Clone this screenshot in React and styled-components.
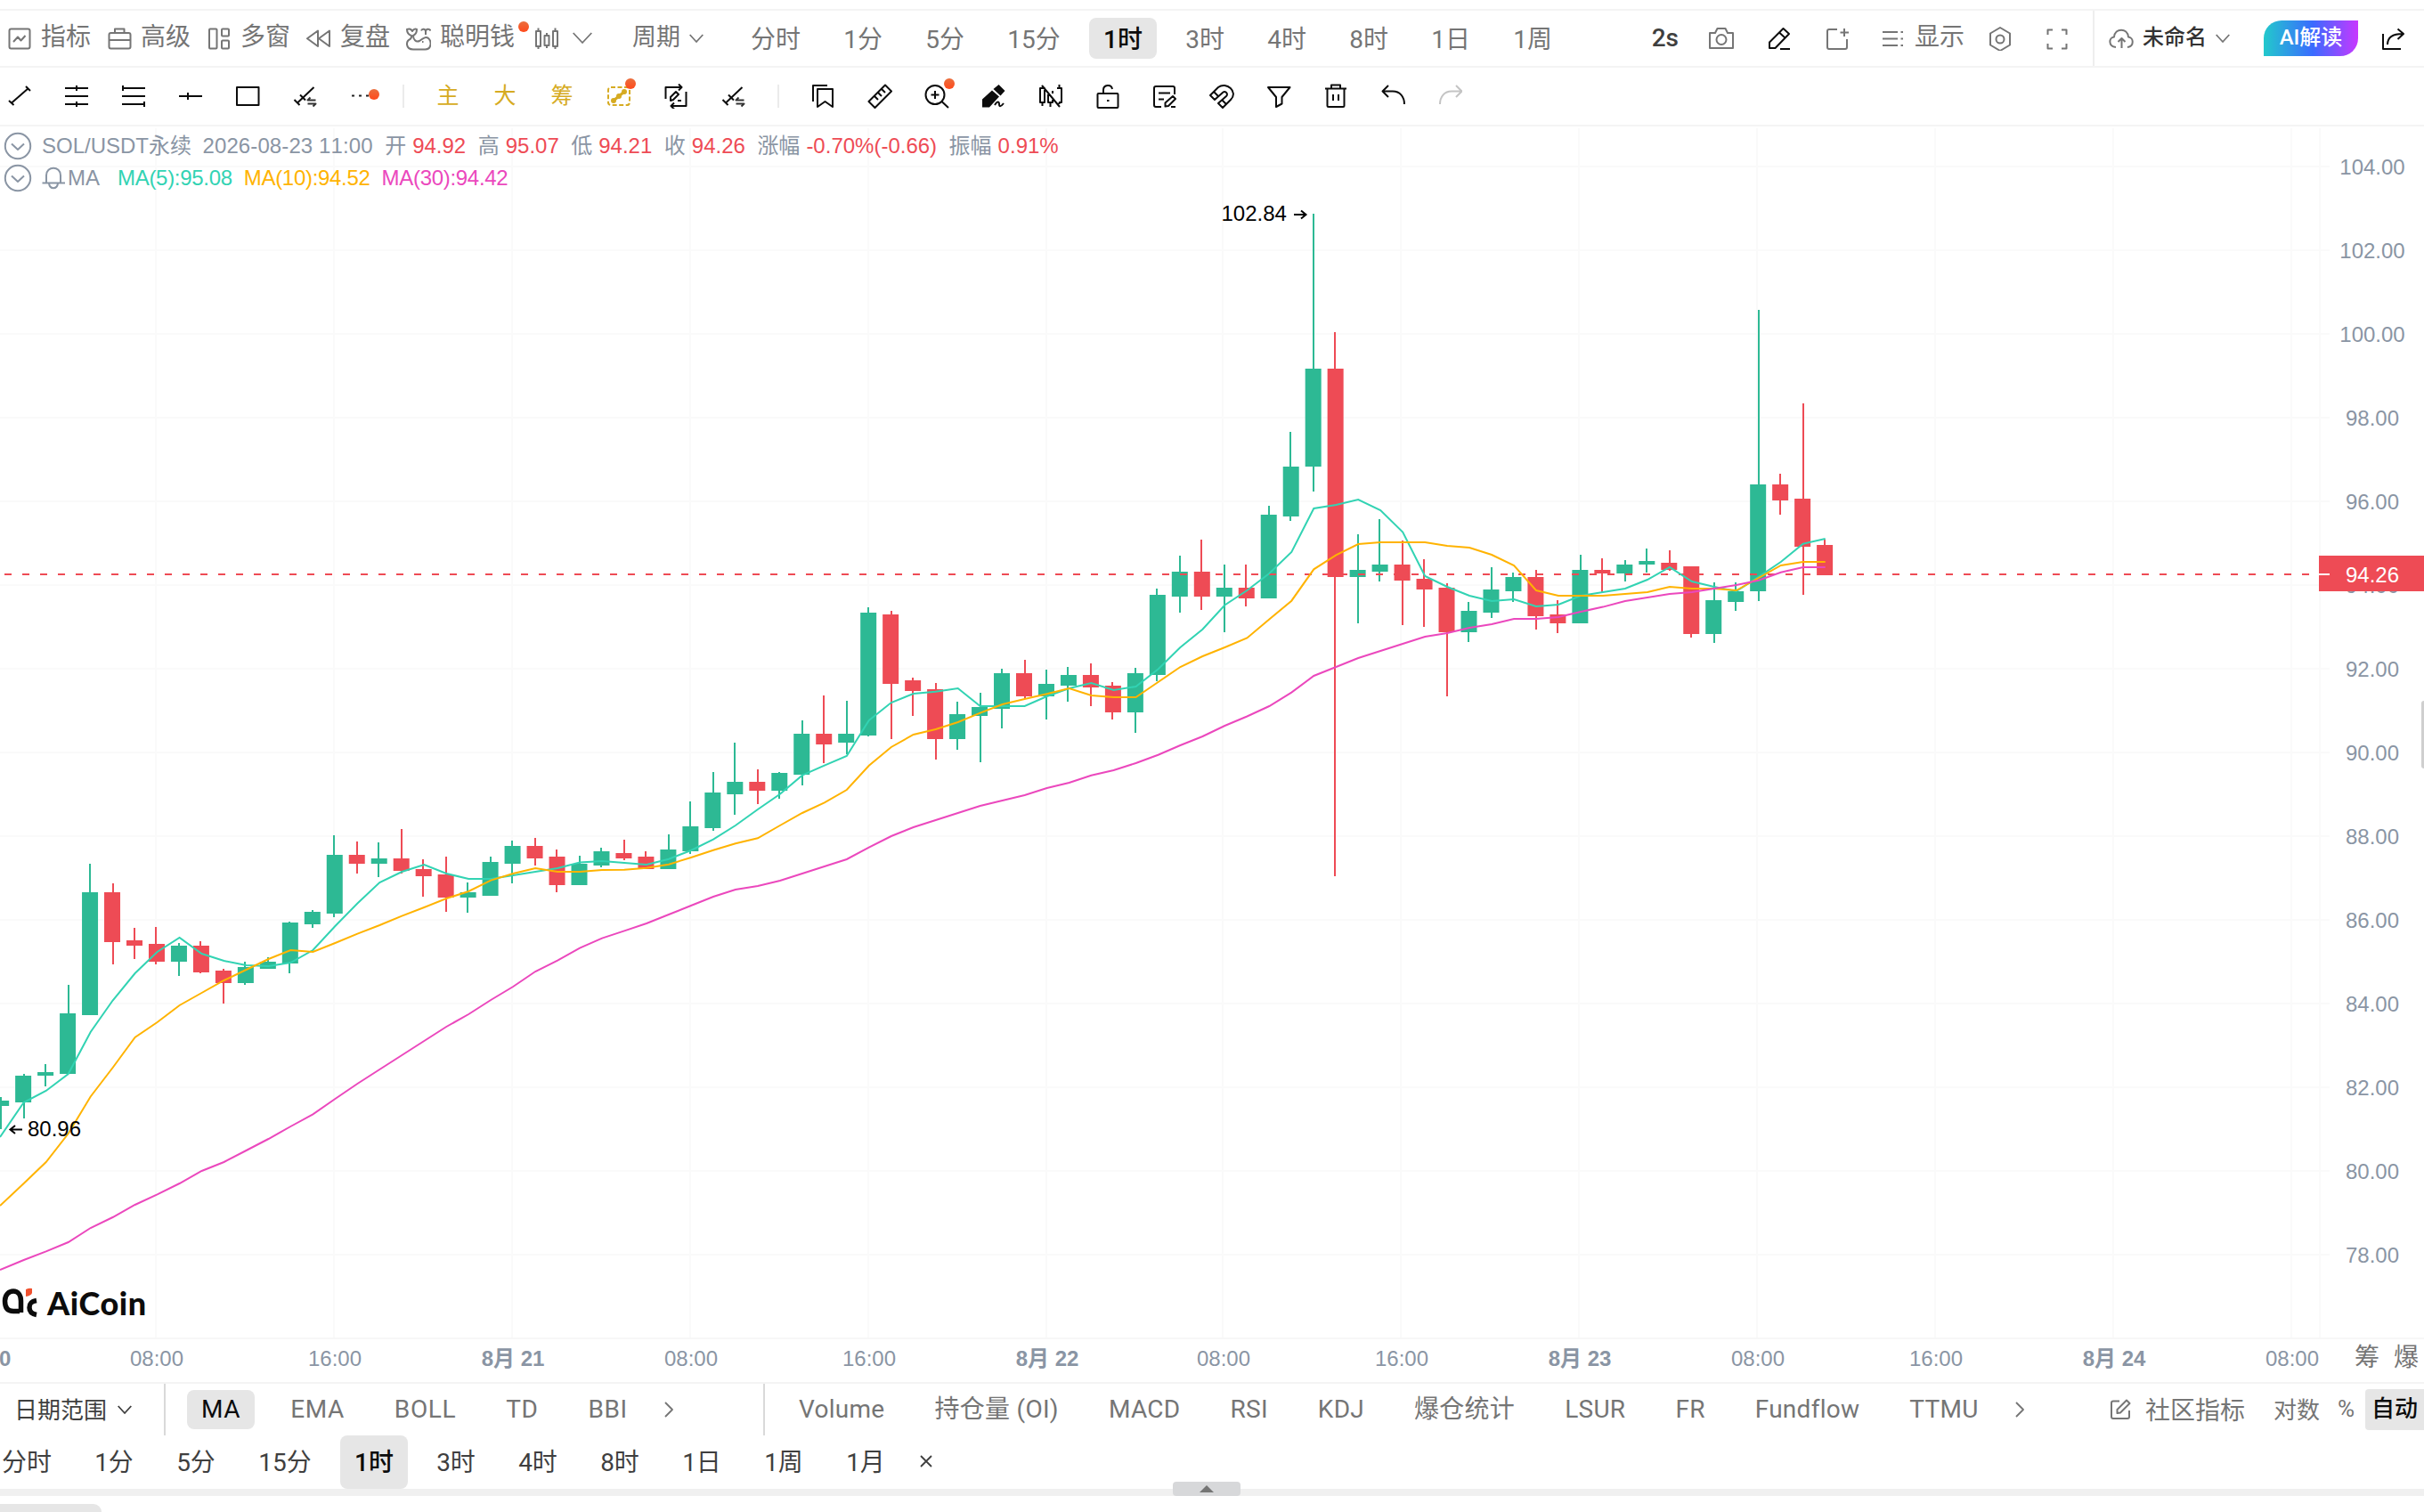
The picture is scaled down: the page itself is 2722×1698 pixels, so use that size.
import React from 'react';
import styled, { createGlobalStyle } from 'styled-components';

const UP = '#2db994';
const DOWN = '#ee4b55';
const AXIS_TEXT = '#8a95a4';
const MA5 = '#32d3b3';
const MA10 = '#ffb300';
const MA30 = '#eb48bd';

const GlobalStyle = createGlobalStyle`
  body {
    margin: 0;
    background: #fff;
    overflow: hidden;
    font-family: Roboto, 'Noto Sans CJK SC', sans-serif;
  }
`;

const Page = styled.div`
  width: 2722px;
  height: 1698px;
  display: flex;
  flex-direction: column;
  overflow: hidden;
  background: #fff;
`;

const TopBar = styled.div`
  height: 62px;
  margin-top: 10px;
  border-top: 2px solid #f4f4f4;
  border-bottom: 2px solid #f4f4f4;
  display: flex;
  align-items: center;
  padding-left: 8px;
  flex-shrink: 0;
  color: #757575;
  font-size: 28px;
`;

const ToolItem = styled.div`
  display: flex;
  align-items: center;
  gap: 10px;
  margin-right: ${props => props.$gap ?? 18}px;
  color: ${props => props.$color || 'inherit'};
  font-size: ${props => props.$size || 28}px;
  font-weight: ${props => props.$weight || 400};
  line-height: 40px;
  white-space: nowrap;
  position: relative;
`;

const Label = styled.span`
  display: block;
  padding-bottom: ${props => props.$lift || 0}px;
`;

const Badge = styled.span`
  position: absolute;
  width: 12px;
  height: 12px;
  border-radius: 50%;
  background: linear-gradient(#ea6f3e, #ff4a1c);
  top: ${props => props.$top}px;
  right: ${props => props.$right}px;
`;

const Periods = styled.div`
  display: flex;
  align-items: center;
  gap: 16px;
  margin-left: ${props => props.$offset}px;
`;

const Period = styled.div`
  box-sizing: border-box;
  height: ${props => props.$height}px;
  min-width: 76px;
  width: ${props => props.$width || 76}px;
  display: flex;
  align-items: center;
  justify-content: center;
  border-radius: 8px;
  font-size: 28px;
  padding-bottom: ${props => props.$lift || 0}px;
  white-space: nowrap;
  color: ${props => (props.$active ? '#0c0c0c' : 'inherit')};
  font-weight: ${props => (props.$active ? 500 : 400)};
  background: ${props => (props.$active ? '#e6e6e6' : 'transparent')};
`;

const RightTools = styled.div`
  margin-left: auto;
  height: 100%;
  display: flex;
  align-items: center;
`;

const Account = styled.div`
  width: 372px;
  height: 100%;
  box-sizing: border-box;
  border-left: 2px solid #eee;
  padding-left: 16px;
  display: flex;
  align-items: center;
`;

const AiButton = styled.div`
  width: 106px;
  height: 40px;
  margin-left: 38px;
  margin-right: 25px;
  border-radius: 20px 0 20px 0;
  background: linear-gradient(90deg, #22c9cc, #3a6bff 52%, #c837ff);
  color: #fff;
  font-size: 24px;
  font-weight: 500;
  line-height: 38px;
  text-align: center;
`;

const DrawBar = styled.div`
  height: 64px;
  flex-shrink: 0;
  border-bottom: 2px solid #f4f4f4;
  display: flex;
  align-items: center;
  padding-left: 8px;
  color: #0c0c0c;
`;

const DrawTool = styled.div`
  position: relative;
  width: 28px;
  height: 28px;
  margin-right: 36px;
  flex-shrink: 0;
  display: flex;
  align-items: center;
  justify-content: center;
  font-size: 25px;
  line-height: 28px;
  color: ${props => props.$color || 'inherit'};
`;

const DrawDivider = styled.div`
  width: 2px;
  height: 26px;
  background: #ebebeb;
  margin-left: ${props => props.$left}px;
  margin-right: ${props => props.$right}px;
`;

const ChartArea = styled.div`
  position: relative;
  height: 1410px;
  flex-shrink: 0;
  border-bottom: 2px solid #f4f4f4;
`;

const ChartSvg = styled.svg`
  display: block;
  font-family: 'Liberation Sans', 'Noto Sans CJK SC', sans-serif;
  font-size: 24px;
`;

const Legend = styled.div`
  position: absolute;
  left: 4px;
  top: 4px;
  font-family: 'Liberation Sans', 'Noto Sans CJK SC', sans-serif;
  font-size: 24px;
  font-kerning: none;
  color: ${AXIS_TEXT};
`;

const LegendRow = styled.div`
  height: 36px;
  display: flex;
  align-items: center;
  white-space: nowrap;
  line-height: 36px;
`;

const LegendText = styled.span`
  display: flex;
  gap: 7px;
  margin-left: ${props => props.$left ?? 13.5}px;
  letter-spacing: ${props => props.$spacing || 0}px;
  color: ${props => props.$color || 'inherit'};
`;

const Value = styled.span`
  color: ${DOWN};
`;

const Logo = styled.div`
  position: absolute;
  left: 2px;
  top: 1299px;
  display: flex;
  align-items: center;
  gap: 11px;
  font-family: Lato, sans-serif;
  font-weight: 900;
  font-size: 36px;
  line-height: 44px;
  letter-spacing: 0.6px;
  color: #0c0c0c;
`;

const AxisActions = styled.div`
  position: absolute;
  right: 6px;
  top: 1363px;
  display: flex;
  gap: 16px;
  font-size: 28px;
  line-height: 40px;
  color: #757575;
`;

const ScrollHandle = styled.div`
  position: absolute;
  right: 0;
  top: 645px;
  width: 3px;
  height: 76px;
  border-radius: 3px 0 0 3px;
  background: #cfcfcf;
`;

const IndicatorBar = styled.div`
  height: 58px;
  flex-shrink: 0;
  display: flex;
  align-items: center;
  color: #757575;
  font-size: 28px;
  white-space: nowrap;
`;

const DateRange = styled.div`
  width: 186px;
  height: 100%;
  box-sizing: border-box;
  border-right: 2px solid #d9d9d9;
  display: flex;
  align-items: center;
  gap: 12px;
  padding-left: 16px;
  font-size: 26px;
  color: #3f3f3f;
`;

const MainIndicators = styled.div`
  box-sizing: border-box;
  width: 673px;
  height: 100%;
  border-right: 2px solid #d9d9d9;
  padding-left: 24px;
  letter-spacing: 0.6px;
  display: flex;
  align-items: center;
  gap: 24px;
`;

const SubIndicators = styled.div`
  display: flex;
  align-items: center;
  gap: 24px;
  padding-left: 22px;
  letter-spacing: 0.28px;
`;

const Indicator = styled.div`
  height: 44px;
  line-height: 44px;
  padding: 0 16px;
  border-radius: 8px;
  color: ${props => (props.$active ? '#0c0c0c' : 'inherit')};
  background: ${props => (props.$active ? '#e6e6e6' : 'transparent')};
`;

const ScaleOptions = styled.div`
  margin-left: auto;
  display: flex;
  align-items: center;
  font-size: 26px;
`;

const Community = styled.div`
  display: flex;
  align-items: center;
  gap: 14px;
  font-size: 28px;
  margin-right: 32px;
`;

const ScaleOption = styled.div`
  margin-right: ${props => props.$gap}px;
  padding-bottom: 3px;
`;

const AutoScale = styled.div`
  width: 66px;
  height: 46px;
  line-height: 45px;
  text-align: center;
  border-radius: 4px 0 0 4px;
  background: #e6e6e6;
  color: #0c0c0c;
  font-weight: 500;
  font-size: 26px;
`;

const PeriodBar = styled.div`
  height: 60px;
  flex-shrink: 0;
  display: flex;
  align-items: center;
  color: #3f3f3f;
`;

const CloseButton = styled.div`
  margin-left: 22px;
  display: flex;
  padding-bottom: 2px;
`;

const Splitter = styled.div`
  position: relative;
  height: 8px;
  flex-shrink: 0;
  background: #f0f0f0;
`;

const SplitterHandle = styled.div`
  position: absolute;
  left: 1317px;
  bottom: 0;
  width: 76px;
  height: 16px;
  border-radius: 4px;
  background: #d7d8da;
  display: flex;
  justify-content: center;
`;

const BottomTab = styled.div`
  width: 114px;
  height: 20px;
  margin-top: 9px;
  border-radius: 0 10px 0 0;
  background: #e6e6e6;
`;

const IconSvg = styled.svg`
  display: block;
  flex-shrink: 0;
`;

const Icon = ({ children, size = 28, width, stroke = 2, color = 'currentColor' }) => (
  <IconSvg
    width={width || size}
    height={size}
    viewBox={`0 0 ${width || size} ${size}`}
    fill="none"
    stroke={color}
    strokeWidth={stroke}
    strokeLinejoin="round"
  >
    {children}
  </IconSvg>
);

const Chevron = ({ width = 16, height = 9, color }) => (
  <Icon width={width} size={height + 2} stroke={1.8} color={color}>
    <path d={`M0.7 1L${width / 2} ${height}L${width - 0.7} 1`} />
  </Icon>
);

const topTools = [
  {
    name: '指标',
    icon: (
      <>
        <rect x="2.5" y="3.5" width="23" height="22" rx="2" />
        <path d="M7 18l5-5.5 3.5 4L20.5 11" />
      </>
    ),
  },
  {
    name: '高级',
    icon: (
      <>
        <rect x="2.5" y="8" width="24" height="17.5" rx="2" />
        <path d="M9 8V3.5h10.5V8M2.5 16h24" />
      </>
    ),
  },
  {
    name: '多窗',
    icon: (
      <>
        <rect x="3" y="3.5" width="8.5" height="22" rx="1" />
        <rect x="17" y="3.5" width="8" height="8" rx="1" />
        <rect x="17" y="16.5" width="8" height="9" rx="1" />
      </>
    ),
  },
  {
    name: '复盘',
    icon: <path d="M13 5.5V23L1 14.3zM26 5.5V23L14 14.3z" />,
  },
  {
    name: '聪明钱',
    gap: 22,
    badge: true,
    icon: (
      <>
        <path d="M1 4c3-1 5 0 6 2 1-2 3-3 5-2 0 4-2 6-4 7 0 4 3 8 7 6 4-3 8-6 11-2 1.5 2 1.8 4 1.5 6-.5 3.5-2.5 5.5-6 5.5H8c-4 0-6.5-2-7-5.5-.2-3 1-5 3.5-6C6 13.500 6.5 12.5 6 11 3 10 1 8 1 4z" />
        <path d="M22 10V6.5c0-3-4-4-5-1M22 6.5c0-3 4-4 5.5-1" />
        <path d="M18 18h1.5" />
      </>
    ),
  },
];

const periods = ['分时', '1分', '5分', '15分', '1时', '3时', '4时', '8时', '1日', '1周'];

const periodWidth = (name) => {
  if (name === '分时') return 88;
  return name === '15分' ? 92 : 76;
};

const measureIcon = (
  <>
    <path d="M6 21.5L24.5 4M2.5 18l6 6M9 12.5l6 6" />
    <path d="M26.5 18.5h-9l3-3M17.5 22.5h9l-3 3" stroke="#333" />
  </>
);

const drawTools = [
  { id: 'line', icon: <path d="M4.5 22L24 5M2 19l5.5 5M21 3l5 5" /> },
  { id: 'levels', icon: <path d="M1 5h26M1 14h26M1 23h26M14 2v6M14 20v6" /> },
  { id: 'channel', icon: <path d="M1 5h26M1 14h26M1 23h26M2 2v6M26 20v6" /> },
  { id: 'hline', icon: <path d="M1 14h26M11 10v8" /> },
  { id: 'rect', icon: <rect x="2" y="4" width="24.5" height="20" /> },
  { id: 'measure', icon: measureIcon },
];

const goldTools = ['主', '大', '筹'];

const editTools = [
  {
    id: 'bookmark',
    icon: <path d="M3 20V2h16M8 6h17v20l-8.5-6L8 26z" />,
  },
  {
    id: 'ruler',
    icon: (
      <>
        <path d="M1.5 20L20 1.5l7 7L8.5 27z" />
        <path d="M8 14l4 4M12 10l4 4M16 6l4 4" />
      </>
    ),
  },
  {
    id: 'zoom',
    badge: true,
    icon: (
      <>
        <circle cx="12" cy="12.5" r="10.5" />
        <path d="M19.5 20l7.5 7M7.5 12.5h9M12 8v9" />
      </>
    ),
  },
  {
    id: 'marker',
    icon: (
      <>
        <path d="M1 26.5v-9L12 7.5l8 7-11 12z" fill="currentColor" stroke="none" />
        <path d="M13.500 6l6-5 7 7-5 5.500z" fill="currentColor" stroke="none" />
        <path d="M15 24c3-5 5-4 5-1s2 3 5-1" />
      </>
    ),
  },
  {
    id: 'hide-candles',
    icon: (
      <path d="M2 5h5v16H2zM4.5 2v3M4.5 21v4M11 12v9h5v-3M13.5 21v5M16 11V8M21 5h5v16h-3M23.5 1v4M23.5 21v2M4 2l20 24" />
    ),
  },
  {
    id: 'lock',
    icon: (
      <>
        <rect x="2.5" y="11" width="23" height="16" rx="1" />
        <path d="M9 11V7c0-6 9-7 10-1M13 19h2.5" />
      </>
    ),
  },
  {
    id: 'note',
    icon: (
      <>
        <path d="M10 26H4c-1.5 0-2-1-2-2V5c0-1.5 1-2 2-2h19c1 0 2 .5 2 2v7M7 10.5h13M7 17.5h6M21 26h5" />
        <path d="M14.5 25.500v-4L23 14l3 3-8 8z" />
      </>
    ),
  },
  {
    id: 'magnet',
    icon: (
      <>
        <path d="M6 18l-5-5 9-9C19-3 33 9 24 18l-9 9-5-5 9-8c3-3-2-7-4-4z" />
        <path d="M5 9l5 5M14 18l5 5" />
      </>
    ),
  },
  { id: 'filter', icon: <path d="M2 4h24.5l-9 11v7.5L11 26V15z" /> },
  {
    id: 'trash',
    icon: (
      <>
        <path d="M4.5 6v18.5c0 1 .5 1.5 1.5 1.5h16c1 0 1.5-.5 1.5-1.5V6M2 5.5h24M9 5V1.5h10V5" />
        <path d="M11 12v7M17 12v7" />
      </>
    ),
  },
  { id: 'undo', icon: <path d="M9 2L2.5 8.5 9 15M2.5 8.5H14c8 0 13 6 13 14.5" /> },
  { id: 'redo', color: '#c4c4c4', icon: <path d="M21 2l6.5 6.5L21 15M27.500 8.5H16C8 8.5 3 14.5 3 23" /> },
];

// [body top, body bottom, high, low, rising]
const candles = [
  [1236, 1242, 1232, 1268, 1], [1208, 1238, 1206, 1256, 1], [1204, 1208, 1195, 1220, 1],
  [1138, 1206, 1106, 1206, 1], [1002, 1140, 970, 1140, 1], [1002, 1058, 992, 1083, 0],
  [1056, 1062, 1042, 1077, 0], [1060, 1080, 1041, 1083, 0], [1062, 1080, 1059, 1096, 1],
  [1062, 1092, 1057, 1093, 0], [1090, 1104, 1088, 1127, 0], [1086, 1104, 1080, 1106, 1],
  [1080, 1088, 1075, 1088, 1], [1036, 1082, 1035, 1093, 1], [1024, 1038, 1022, 1042, 1],
  [960, 1026, 938, 1030, 1], [960, 970, 945, 981, 0], [964, 970, 946, 985, 1],
  [964, 978, 931, 981, 0], [976, 984, 965, 1007, 0], [982, 1008, 962, 1024, 0],
  [1002, 1008, 991, 1025, 1], [968, 1006, 962, 1006, 1], [950, 970, 944, 992, 1],
  [950, 964, 941, 972, 0], [962, 994, 954, 1002, 0], [970, 994, 961, 994, 1],
  [956, 972, 952, 974, 1], [958, 964, 943, 966, 0], [962, 976, 956, 976, 0],
  [954, 976, 937, 976, 1], [928, 956, 900, 959, 1], [890, 930, 867, 933, 1],
  [878, 892, 834, 915, 1], [878, 888, 864, 903, 0], [868, 888, 867, 897, 1],
  [824, 870, 809, 882, 1], [824, 836, 781, 857, 0], [824, 834, 787, 847, 1],
  [688, 826, 682, 827, 1], [690, 768, 686, 830, 0], [764, 776, 761, 804, 0],
  [774, 830, 767, 853, 0], [802, 830, 788, 842, 1], [794, 804, 778, 856, 1],
  [756, 796, 751, 818, 1], [756, 782, 741, 784, 0], [768, 782, 752, 808, 1],
  [758, 770, 749, 788, 1], [758, 772, 745, 793, 0], [770, 800, 766, 808, 0],
  [756, 800, 750, 823, 1], [668, 758, 661, 765, 1], [642, 670, 624, 688, 1],
  [642, 670, 606, 685, 0], [660, 670, 634, 710, 1], [660, 672, 634, 681, 0],
  [578, 672, 568, 672, 1], [524, 580, 485, 585, 1], [414, 524, 240, 552, 1],
  [414, 648, 373, 984, 0], [640, 648, 600, 700, 1], [634, 642, 583, 653, 1],
  [634, 652, 607, 702, 0], [650, 662, 628, 704, 0], [660, 710, 655, 782, 0],
  [686, 710, 676, 721, 1], [662, 688, 637, 694, 1], [648, 664, 643, 676, 1],
  [648, 692, 640, 707, 0], [690, 700, 674, 711, 0], [640, 700, 623, 700, 1],
  [640, 644, 627, 666, 0], [634, 644, 629, 653, 1], [630, 634, 616, 643, 1],
  [632, 640, 618, 641, 0], [636, 712, 636, 716, 0], [674, 712, 654, 722, 1],
  [664, 676, 654, 686, 1], [544, 664, 348, 675, 1], [544, 562, 532, 578, 0],
  [560, 614, 453, 668, 0], [612, 646, 606, 646, 0],
];

const ma5 = [
  1277, 1238, 1225, 1206, 1159, 1123.5, 1093, 1069, 1053, 1071, 1079, 1084, 1085, 1081, 1067, 1040,
  1014.5, 991, 979, 971, 981, 987, 987, 983, 979, 975, 968.5, 967, 969, 971, 964.7, 955, 942.7, 927,
  909, 891.7, 870.7, 859.7, 849, 809, 789, 779, 776.7, 773, 793, 793, 793, 782, 773, 767, 775, 771,
  751.5, 727, 706.7, 679.5, 663, 644, 620, 571, 567, 561, 573, 597.6, 647, 659, 669, 675, 673, 681,
  679, 669, 665, 661, 651, 637, 653, 659, 664, 647.8, 631, 610.7, 605,
];

const ma10 = [
  1354, 1329, 1305, 1273, 1231.5, 1199, 1165, 1148, 1129, 1115, 1101, 1089, 1077, 1067, 1069, 1059,
  1048.6, 1039, 1028.6, 1019, 1009, 1001, 988.6, 981, 975, 979, 979, 977, 976.7, 974.7, 970.7, 963,
  954.7, 947.3, 941.3, 927, 913, 901.3, 887, 859.7, 839, 825, 819, 811, 800.7, 791, 785, 779.3, 773,
  781, 783, 783, 766, 749, 737, 727, 716.5, 695.5, 674.7, 639.3, 623.4, 611, 609, 609, 609, 613,
  615, 623, 635, 663, 669, 669, 669, 667, 665, 659, 661, 661, 663, 649, 635, 631, 631,
];

const ma30 = [
  1426, 1415, 1405.4, 1395, 1379, 1367, 1353, 1341.4, 1329, 1315, 1305, 1292, 1279, 1265, 1251.4,
  1234, 1217, 1201, 1185, 1169, 1153, 1139, 1123, 1108, 1091, 1078.6, 1064.6, 1053.6, 1045.4, 1037,
  1027, 1017, 1007, 999, 995, 989, 981, 973, 965, 951.7, 939, 929, 921, 913, 905, 899, 893, 885,
  879, 870.7, 865, 857, 847.7, 837, 827, 815, 804.5, 793, 777.6, 759, 749, 739, 731, 723, 715, 711,
  705, 701, 695, 695, 693, 687, 681.6, 675, 671, 667, 665, 661, 657, 651.7, 642.7, 637, 637,
];

const timeLabels = [
  '8月 20', '08:00', '16:00', '8月 21', '08:00', '16:00', '8月 22', '08:00', '16:00',
  '8月 23', '08:00', '16:00', '8月 24', '08:00',
];

const prices = [104, 102, 100, 98, 96, 94, 92, 90, 88, 86, 84, 82, 80, 78];

const centerOf = (index) => 1.15 + index * 24.975;
const priceY = (price) => 187 + (104 - price) * 47;
const gridX = (n) => Math.round((centerOf(n * 8 - 1) - 1.9) / 2) * 2;
const toPoints = (values) =>
  values.map((y, i) => `${(i === 0 ? 0 : centerOf(i) + 0.6).toFixed(1)},${y}`).join(' ');

const Candle = ({ index, data }) => {
  const [top, bottom, high, low, rising] = data;
  const center = centerOf(index);
  const fill = rising ? UP : DOWN;
  return (
    <g fill={fill}>
      <rect x={Math.floor(center / 2) * 2} y={high} width="2" height={low - high} />
      <rect x={center - 9} y={top} width="18" height={bottom - top} />
    </g>
  );
};

const PriceChart = () => (
  <ChartSvg width="2722" height="1410" viewBox="0 142 2722 1410">
    <g fill="#fafafa">
      {prices.map((price) => (
        <rect key={price} x="0" y={priceY(price) - 1} width="2616" height="2" />
      ))}
      {timeLabels.slice(1).map((label, i) => (
        <rect key={i} x={gridX(i + 1)} y="144" width="2" height="1358" />
      ))}
      <rect x="2604" y="144" width="2" height="1358" />
      <rect x="0" y="1502" width="2722" height="2" fill="#f7f7f7" />
    </g>
    {candles.map((data, i) => (
      <Candle key={i} index={i} data={data} />
    ))}
    <path d="M5 645H2604" stroke={DOWN} strokeWidth="2" strokeDasharray="8 12" />
    <g fill="none" strokeWidth="2">
      <polyline points={toPoints(ma5)} stroke={MA5} />
      <polyline points={toPoints(ma10)} stroke={MA10} />
      <polyline points={toPoints(ma30)} stroke={MA30} />
    </g>
    <g fill="#000">
      <text x="1371.5" y="248">102.84</text>
      <text x="31" y="1275.5">80.96</text>
      <path d="M1453 241h13M1461 236.5l5.5 4.5-5.5 4.5" fill="none" stroke="#000" strokeWidth="2" />
      <path d="M25 1268.5H11M17 1264l-5.5 4.5 5.5 4.5" fill="none" stroke="#000" strokeWidth="2" />
    </g>
    <g fill={AXIS_TEXT} textAnchor="middle">
      {prices.map((price) => (
        <text key={price} x="2664" y={priceY(price) + 9}>{price.toFixed(2)}</text>
      ))}
      {timeLabels.map((label, i) => (
        <text
          key={i}
          x={i === 0 ? -23 : gridX(i) + 2}
          y="1534"
          fontWeight={label.includes('月') ? 700 : 400}
        >
          {label}
        </text>
      ))}
    </g>
    <rect x="2604" y="624" width="118" height="40" fill={DOWN} />
    <rect x="2604" y="644" width="12" height="2" fill="#fff" />
    <text x="2664" y="654" fill="#fff" textAnchor="middle">94.26</text>
  </ChartSvg>
);

const CollapseIcon = () => (
  <Icon size={32}>
    <circle cx="16" cy="16" r="14.2" />
    <path d="M9 13.5l7 6.5 7-6.5" />
  </Icon>
);

const quote = [
  ['开', '94.92'],
  ['高', '95.07'],
  ['低', '94.21'],
  ['收', '94.26'],
  ['涨幅', '-0.70%(-0.66)'],
  ['振幅', '0.91%'],
];

const ChartLegend = () => (
  <Legend>
    <LegendRow>
      <CollapseIcon />
      <LegendText $left={11}>SOL/USDT永续</LegendText>
      <LegendText $left={12.5} $spacing={0.1}>2026-08-23 11:00</LegendText>
      {quote.map(([name, value]) => (
        <LegendText key={name}>
          {name}
          <Value>{value}</Value>
        </LegendText>
      ))}
    </LegendRow>
    <LegendRow>
      <CollapseIcon />
      <LegendText $left={11}>
        <Icon size={28}>
          <path d="M0.5 19.5h25.5M5 19.5V11C5 0 21 0 21 11v8.5M8 20c1 7 9 7 10 0" />
        </Icon>
      </LegendText>
      <LegendText $left={1}>MA</LegendText>
      <LegendText $left={20} $spacing={-0.3} $color={MA5}>MA(5):95.08</LegendText>
      <LegendText $left={13} $spacing={-0.3} $color={MA10}>MA(10):94.52</LegendText>
      <LegendText $left={13} $spacing={-0.3} $color={MA30}>MA(30):94.42</LegendText>
    </LegendRow>
  </Legend>
);

const App = () => (
  <Page>
    <GlobalStyle />
    <TopBar>
      {topTools.map((tool) => (
        <ToolItem key={tool.name} $gap={tool.gap}>
          <Icon>{tool.icon}</Icon>
          <Label $lift={3}>{tool.name}</Label>
          {tool.badge && <Badge $top={2} $right={-16} />}
        </ToolItem>
      ))}
      <ToolItem $gap={15}>
        <Icon>
          <path d="M2 6h5v17H2zM4.5 2.5V6M4.500 23v3M11.5 11h5v11h-5zM14 8v3M14 22v3M21 6h5v17h-5zM23.5 2.500V6M23.5 23v3" />
        </Icon>
      </ToolItem>
      <ToolItem $gap={45}>
        <Chevron width={22} height={12} />
      </ToolItem>
      <ToolItem $gap={0} $size={27}>
        <Label $lift={3}>周期</Label>
        <Chevron />
      </ToolItem>
      <Periods $offset={37}>
        {periods.map((name) => (
          <Period key={name} $height={46} $width={periodWidth(name)} $active={name === '1时'} $lift={3}>
            {name}
          </Period>
        ))}
      </Periods>
      <RightTools>
        <ToolItem $gap={34} $color="#3f3f3f" $weight={500}>2s</ToolItem>
        <ToolItem $gap={37}>
          <Icon>
            <path d="M1 8h6l2.5-5h9L21 8h6v17H1z" />
            <circle cx="14" cy="15.5" r="5.5" />
          </Icon>
        </ToolItem>
        <ToolItem $gap={37} $color="#0c0c0c">
          <Icon>
            <path d="M3 25v-6.5L18.5 3 25 9 9.5 25zM14 7.5l6.5 6M15 26h11" />
          </Icon>
        </ToolItem>
        <ToolItem $gap={35}>
          <Icon>
            <path d="M14 4H5C3.5 4 3 5 3 6v18c0 1.5.5 2 2 2h18c1.5 0 2-.5 2-2V15M22 3v9M17.5 7.5h9.5" />
          </Icon>
        </ToolItem>
        <ToolItem $gap={26}>
          <Icon>
            <path d="M2 7h17M2 14.5h17M2 22h17M22.5 7H25M22.5 14.5H25M22.5 22H25" />
          </Icon>
          <Label $lift={3}>显示</Label>
        </ToolItem>
        <ToolItem $gap={36}>
          <Icon>
            <path d="M14 2l11 6.5v13L14 28 3 21.5v-13z" />
            <circle cx="14" cy="15" r="4.5" />
          </Icon>
        </ToolItem>
        <ToolItem $gap={26}>
          <Icon>
            <path d="M3.5 10V4.5h5.5M19 4.5h5.5V10M24.5 20v5.500H19M9 25.5H3.5V20" />
          </Icon>
        </ToolItem>
        <Account>
          <ToolItem $gap={0} $color="#333" $size={24} $weight={500}>
            <Icon color="#757575">
              <path d="M8 24C-1 23 0 13 6 12.5 7 2 21 2 22 12.5c6 .5 7 10-1 11.5M14.5 25V14M10.500 18l4-4 4 4" />
            </Icon>
            <Label $lift={3}>未命名</Label>
            <Chevron color="#757575" />
          </ToolItem>
          <AiButton>AI解读</AiButton>
          <ToolItem $gap={0} $color="#0c0c0c">
            <Icon>
              <path d="M3 9v17h20M8 21c0-8 5-12 17-12M19.5 3.5L26 9l-6.5 6" />
            </Icon>
          </ToolItem>
        </Account>
      </RightTools>
    </TopBar>

    <DrawBar>
      {drawTools.map((tool) => (
        <DrawTool key={tool.id}>
          <Icon>{tool.icon}</Icon>
        </DrawTool>
      ))}
      <DrawTool>
        <Icon>
          <path d="M3 13.5h3M11 13.5h3M19 13.5h3" stroke="#222" />
        </Icon>
        <Badge $top={6} $right={-6} />
      </DrawTool>
      <DrawDivider $left={-4} $right={35} />
      {goldTools.map((name) => (
        <DrawTool key={name} $color="#d6ab22">{name}</DrawTool>
      ))}
      <DrawTool $color="#d6ab22">
        <Icon>
          <rect x="2" y="4" width="24" height="20" rx="3" strokeDasharray="5 2.5" />
          <path d="M8 19l12-10" strokeWidth="3" />
          <circle cx="8" cy="19" r="2" fill="currentColor" />
          <circle cx="14" cy="14" r="2" fill="currentColor" />
          <circle cx="20" cy="9" r="2" fill="currentColor" />
        </Icon>
        <Badge $top={-6} $right={-5} />
      </DrawTool>
      <DrawTool>
        <Icon>
          <path d="M2.5 17V4h18M17 .5l3.5 3.5L17 7.5M25.5 9v16h-17M12 21.5L8.5 25l3.5 3.5" />
          <path d="M8 19v-4l6-6 3 3-6 6zM16 19h4" />
        </Icon>
      </DrawTool>
      <DrawTool>
        <Icon>{measureIcon}</Icon>
      </DrawTool>
      <DrawDivider $left={0} $right={35} />
      {editTools.map((tool) => (
        <DrawTool key={tool.id} $color={tool.color}>
          <Icon>{tool.icon}</Icon>
          {tool.badge && <Badge $top={-6} $right={-6} />}
        </DrawTool>
      ))}
    </DrawBar>

    <ChartArea>
      <PriceChart />
      <ChartLegend />
      <Logo>
        <svg width="40" height="34" viewBox="0 0 40 34">
          <path d="M20 26.5H13C4 26.5 3.5 19 3.5 15 3.5 8 8 4 13 4s8.5 4 8.5 11v13" fill="none" stroke="#0c0c0c" strokeWidth="5.500" />
          <path d="M39 14.500c-6 1-8 3-8 8s3 7 8 8" fill="none" stroke="#0c0c0c" strokeWidth="5.500" />
          <path d="M27 2q4-2 7-1v5q-1 3-7 4z" fill="#f0502e" />
        </svg>
        AiCoin
      </Logo>
      <AxisActions>
        <span>筹</span>
        <span>爆</span>
      </AxisActions>
      <ScrollHandle />
    </ChartArea>

    <IndicatorBar>
      <DateRange>
        <Label $lift={3}>日期范围</Label>
        <Chevron color="#3f3f3f" />
      </DateRange>
      <MainIndicators>
        {['MA', 'EMA', 'BOLL', 'TD', 'BBI'].map((name) => (
          <Indicator key={name} $active={name === 'MA'}>{name}</Indicator>
        ))}
        <Icon width={12} size={20} stroke={1.8}>
          <path d="M2 2l8 8-8 8" />
        </Icon>
      </MainIndicators>
      <SubIndicators>
        {['Volume', '持仓量 (OI)', 'MACD', 'RSI', 'KDJ', '爆仓统计', 'LSUR', 'FR', 'Fundflow', 'TTMU'].map((name) => (
          <Indicator key={name}>{name}</Indicator>
        ))}
        <Icon width={12} size={20} stroke={1.8}>
          <path d="M2 2l8 8-8 8" />
        </Icon>
      </SubIndicators>
      <ScaleOptions>
        <Community>
          <Icon size={28}>
            <path d="M13 4.5H6c-1.5 0-2 .5-2 2V22c0 1.500.5 2 2 2h16c1.5 0 2-.5 2-2v-7M10.5 18v-4L21 3.5l3.5 3.5L14 17.5z" />
          </Icon>
          <Label $lift={2}>社区指标</Label>
        </Community>
        <ScaleOption $gap={20}>对数</ScaleOption>
        <ScaleOption $gap={12}>%</ScaleOption>
        <AutoScale>自动</AutoScale>
      </ScaleOptions>
    </IndicatorBar>

    <PeriodBar>
      <Periods $offset={-14}>
        {[...periods, '1月'].map((name) => (
          <Period key={name} $height={60} $width={periodWidth(name)} $active={name === '1时'} $lift={5}>
            {name}
          </Period>
        ))}
      </Periods>
      <CloseButton>
        <Icon size={16} stroke={1.8}>
          <path d="M2 2l12 12M14 2L2 14" />
        </Icon>
      </CloseButton>
    </PeriodBar>

    <Splitter>
      <SplitterHandle>
        <svg width="16" height="16" viewBox="0 0 16 16">
          <path d="M8 4l8 8H0z" fill="#757575" />
        </svg>
      </SplitterHandle>
    </Splitter>
    <BottomTab />
  </Page>
);

export default App;
